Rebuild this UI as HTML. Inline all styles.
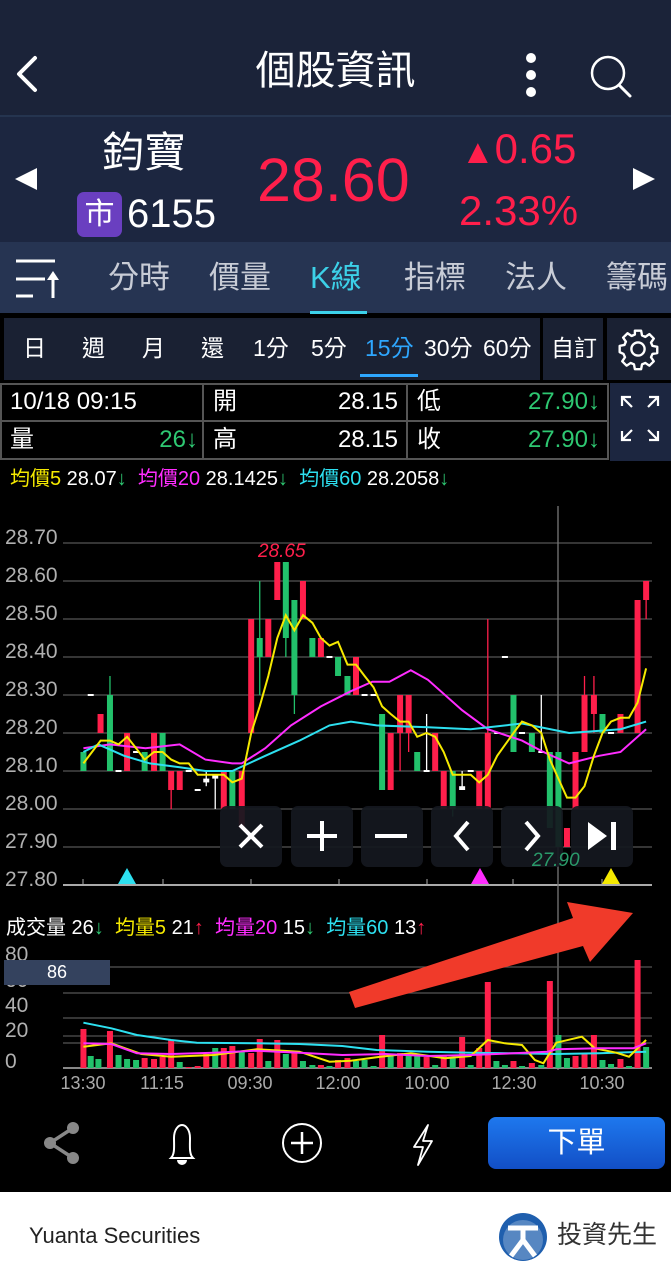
<!DOCTYPE html>
<html><head><meta charset="utf-8">
<style>
*{margin:0;padding:0;box-sizing:border-box}
body{width:671px;height:1280px;background:#000;font-family:"Liberation Sans","Noto Sans CJK TC",sans-serif;position:relative;overflow:hidden;color:#fff}
.a{position:absolute;white-space:nowrap}
</style></head><body>
<!-- header -->
<div class="a" style="left:0;top:0;width:671px;height:115px;background:#1b2339"></div>
<svg class="a" style="left:0;top:0" width="671" height="115">
<polyline points="35,58 19,74 35,90" fill="none" stroke="#fff" stroke-width="4" stroke-linecap="round" stroke-linejoin="round"/>
<circle cx="531" cy="58" r="5" fill="#fff"/><circle cx="531" cy="75" r="5" fill="#fff"/><circle cx="531" cy="92" r="5" fill="#fff"/>
<circle cx="608" cy="73" r="16" fill="none" stroke="#fff" stroke-width="2.5"/><line x1="619" y1="85" x2="630" y2="96" stroke="#fff" stroke-width="3" stroke-linecap="round"/>
</svg>
<div class="a" style="left:0;top:46px;width:671px;text-align:center;font-size:40px;line-height:50px">個股資訊</div>
<!-- stock -->
<div class="a" style="left:0;top:115px;width:671px;height:127px;background:#1c2640;border-top:2px solid #25344f"></div>
<svg class="a" style="left:0;top:115px" width="671" height="127">
<polygon points="37,53 37,75 15,64" fill="#fff"/><polygon points="633,53 633,75 655,64" fill="#fff"/>
</svg>
<div class="a" style="left:102px;top:127px;font-size:42px;line-height:52px">鈞寶</div>
<div class="a" style="left:77px;top:192px;width:45px;height:45px;background:#6a3fc0;border-radius:7px;font-size:30px;line-height:45px;text-align:center">市</div>
<div class="a" style="left:127px;top:192px;font-size:40px;line-height:44px">6155</div>
<div class="a" style="left:257px;top:146px;font-size:61px;line-height:68px;color:#ff1f4b">28.60</div>
<div class="a" style="left:461px;top:127px;font-size:42px;line-height:44px;color:#ff1f4b"><span style="font-size:34px">▲</span>0.65</div>
<div class="a" style="left:459px;top:189px;font-size:42px;line-height:44px;color:#ff1f4b">2.33%</div>
<!-- tabs -->
<div class="a" style="left:0;top:242px;width:671px;height:71px;background:#263452"></div>
<svg class="a" style="left:0;top:242px" width="671" height="75">
<line x1="16" y1="19" x2="55" y2="19" stroke="#fff" stroke-width="3"/>
<line x1="16" y1="37" x2="45" y2="37" stroke="#fff" stroke-width="3"/>
<line x1="16" y1="54" x2="33" y2="54" stroke="#fff" stroke-width="3"/>
<line x1="53" y1="56" x2="53" y2="34" stroke="#fff" stroke-width="3"/><polygon points="47,38 53,29 59,38" fill="#fff"/>
<rect x="310" y="69" width="57" height="3" fill="#3cd0e8"/>
</svg>
<div class="a" style="top:257px;font-size:31px;line-height:42px;color:#c8ccd6;left:0;width:671px">
<span class="a" style="left:108px">分時</span><span class="a" style="left:209px">價量</span><span class="a" style="left:310px;color:#3cd0e8">K線</span><span class="a" style="left:404px">指標</span><span class="a" style="left:505px">法人</span><span class="a" style="left:606px">籌碼</span></div>
<!-- period bar -->
<div class="a" style="left:4px;top:318px;width:536px;height:62px;background:#1a2133"></div>
<div class="a" style="left:543px;top:318px;width:60px;height:62px;background:#1a2133"></div>
<div class="a" style="left:607px;top:318px;width:64px;height:62px;background:#1a2133"></div>
<div class="a" style="top:332px;font-size:23px;line-height:32px;left:0;width:671px">
<span class="a" style="left:23px">日</span><span class="a" style="left:82px">週</span><span class="a" style="left:142px">月</span><span class="a" style="left:201px">還</span><span class="a" style="left:253px">1分</span><span class="a" style="left:311px">5分</span><span class="a" style="left:365px;color:#2ea7ff">15分</span><span class="a" style="left:424px">30分</span><span class="a" style="left:483px">60分</span><span class="a" style="left:551px">自訂</span></div>
<div class="a" style="left:360px;top:374px;width:58px;height:3px;background:#2ea7ff"></div>
<svg class="a" style="left:616px;top:327px" width="44" height="44" viewBox="0 0 24 24"><path d="M10.3 2h3.4l.5 2.6 1.8.8 2.2-1.5 2.4 2.4-1.5 2.2.8 1.8 2.6.5v3.4l-2.6.5-.8 1.8 1.5 2.2-2.4 2.4-2.2-1.5-1.8.8-.5 2.6h-3.4l-.5-2.6-1.8-.8-2.2 1.5-2.4-2.4 1.5-2.2-.8-1.8L2 13.7v-3.4l2.6-.5.8-1.8-1.5-2.2 2.4-2.4 2.2 1.5 1.8-.8z" fill="none" stroke="#fff" stroke-width="1.3" stroke-linejoin="round"/><circle cx="12" cy="12" r="3.6" fill="none" stroke="#fff" stroke-width="1.3"/></svg>
<!-- info table -->
<svg class="a" style="left:0;top:383px" width="671" height="78">
<rect x="610" y="0" width="61" height="78" fill="#1c2640"/>
<g fill="none" stroke="#555" stroke-width="2"><rect x="1" y="1" width="607" height="75"/><line x1="1" y1="38" x2="608" y2="38"/><line x1="203" y1="0" x2="203" y2="77"/><line x1="407" y1="0" x2="407" y2="77"/></g>
<g stroke="#fff" stroke-width="2.2" fill="none"><path d="M622 23v-9h9M622 14l10 10M658 23v-9h-9M658 14l-10 10M622 48v9h9M622 57l10-10M658 48v9h-9M658 57l-10-10"/></g>
</svg>
<div class="a" style="top:386px;font-size:24px;line-height:32px;left:0;width:671px">
<span class="a" style="left:10px">10/18 09:15</span><span class="a" style="left:213px">開</span><span class="a" style="right:273px">28.15</span><span class="a" style="left:417px">低</span><span class="a" style="right:71px;color:#2ec872">27.90↓</span></div>
<div class="a" style="top:424px;font-size:24px;line-height:32px;left:0;width:671px">
<span class="a" style="left:10px">量</span><span class="a" style="right:473px;color:#2ec872">26↓</span><span class="a" style="left:213px">高</span><span class="a" style="right:273px">28.15</span><span class="a" style="left:417px">收</span><span class="a" style="right:71px;color:#2ec872">27.90↓</span></div>
<div class="a" style="left:10px;top:466px;font-size:20px;line-height:26px"><span style="color:#f5e900">均價5</span> 28.07<span style="color:#2ec872">↓</span>&nbsp; <span style="color:#ff2cff">均價20</span> 28.1425<span style="color:#2ec872">↓</span>&nbsp; <span style="color:#2de0f0">均價60</span> 28.2058<span style="color:#2ec872">↓</span></div>
<!-- charts -->
<svg id="ch" class="a" style="left:0;top:0" width="671" height="1110"></svg>
<div class="a" style="left:4px;top:960px;width:106px;height:25px;background:#34425e;font-size:18px;line-height:25px;text-align:center">86</div>
<!-- toolbar -->
<svg class="a" style="left:0;top:1110px" width="671" height="82">
<g fill="#888"><circle cx="73" cy="18" r="6"/><circle cx="50" cy="33" r="6"/><circle cx="73" cy="48" r="6"/></g>
<path d="M73 18L50 33L73 48" stroke="#888" stroke-width="3.5" fill="none"/>
<path d="M171 48c4-4 3-12 3-20 0-8 4-13 8-13s8 5 8 13c0 8-1 16 3 20z" fill="none" stroke="#fff" stroke-width="2"/><path d="M177 50a5 5 0 0 0 10 0z" fill="#fff"/>
<circle cx="302" cy="33" r="19" fill="none" stroke="#fff" stroke-width="2"/><path d="M302 22v22M291 33h22" stroke="#fff" stroke-width="2.5"/>
<path d="M428 15l-14 22h9l-5 18 14-24h-9z" fill="none" stroke="#fff" stroke-width="1.8" stroke-linejoin="round"/>
<defs><linearGradient id="bg" x1="0" y1="0" x2="0" y2="1"><stop offset="0" stop-color="#1e78ee"/><stop offset="1" stop-color="#124fc6"/></linearGradient></defs>
<rect x="488" y="7" width="177" height="52" rx="8" fill="url(#bg)"/>
</svg>
<div class="a" style="left:488px;top:1117px;width:177px;text-align:center;font-size:29px;line-height:52px">下單</div>
<!-- footer -->
<div class="a" style="left:0;top:1192px;width:671px;height:88px;background:#fff"></div>
<div class="a" style="left:29px;top:1222px;font-size:22px;line-height:28px;color:#222">Yuanta Securities</div>
<svg class="a" style="left:496px;top:1210px" width="54" height="54"><circle cx="27" cy="27" r="24" fill="#1f5fae"/><circle cx="27" cy="30" r="20" fill="#fff" opacity=".25"/><path d="M12 18h30M27 18v12M27 30l-12 16M27 30l12 16" stroke="#fff" stroke-width="5"/></svg>
<div class="a" style="left:557px;top:1220px;font-size:25px;line-height:30px;color:#333">投資先生</div>
<script>
var s='';
function Y(p){return 543+(28.70-p)*380;}
function X(z){return z/2.337;}
var lab=['28.70','28.60','28.50','28.40','28.30','28.20','28.10','28.00','27.90','27.80'];
for(var i=0;i<10;i++){var y=543+i*38;s+='<line x1="63" y1="'+y+'" x2="652" y2="'+y+'" stroke="#555" stroke-width="1.3"/>';s+='<text x="5" y="'+(y+1)+'" fill="#b0b0b0" font-size="21">'+lab[i]+'</text>';}
s+='<line x1="63" y1="885" x2="652" y2="885" stroke="#aaa" stroke-width="2"/>';
[83,163,251,339,427,513,602].forEach(function(x){s+='<line x1="'+x+'" y1="879" x2="'+x+'" y2="885" stroke="#aaa"/>';});
s+='<line x1="558" y1="506" x2="558" y2="1070" stroke="#777" stroke-width="1.3"/>';
var C=[[195,'g',28.15,28.10],[212,'w',28.30,28.30],[235,'r',28.25,28.20],[257,'g',28.30,28.10,28.35,28.10],[277,'w',28.10,28.10],[297,'r',28.20,28.10],[318,'w',28.15,28.15],[338,'g',28.15,28.10],[360,'r',28.20,28.10],[380,'g',28.20,28.10],[400,'r',28.10,28.05,28.10,28.00],[420,'r',28.10,28.05],[441,'w',28.10,28.10],[462,'w',28.05,28.05],[482,'w',28.08,28.07,28.10,28.06],[503,'w',28.09,28.08,28.09,28.00],[523,'r',28.10,28.00],[543,'g',28.10,28.00],[565,'r',28.10,27.95],[587,'r',28.50,28.20],[607,'g',28.45,28.40,28.60,28.30],[627,'r',28.50,28.40],[648,'r',28.65,28.55],[668,'g',28.65,28.45,28.65,28.40],[688,'g',28.55,28.30,28.55,28.25],[708,'r',28.60,28.50],[730,'g',28.45,28.40],[750,'r',28.45,28.40],[770,'w',28.40,28.40],[790,'g',28.40,28.35],[812,'g',28.35,28.30],[832,'r',28.40,28.30],[852,'w',28.30,28.30],[873,'w',28.30,28.30],[893,'g',28.25,28.05],[913,'r',28.20,28.05],[935,'r',28.30,28.20,28.30,28.10],[955,'r',28.30,28.20,28.30,28.15],[975,'g',28.15,28.10],[997,'w',28.10,28.10,28.25,28.10],[1017,'r',28.20,28.10],[1037,'r',28.10,28.00],[1058,'g',28.10,28.00,28.10,27.98],[1080,'w',28.06,28.05,28.10,28.05],[1100,'w',28.10,28.10],[1120,'r',28.10,28.00],[1140,'r',28.20,28.00,28.50,28.00],[1162,'w',28.20,28.20],[1180,'w',28.40,28.40],[1200,'g',28.30,28.15],[1220,'w',28.20,28.20],[1243,'g',28.20,28.15],[1265,'w',28.15,28.15,28.30,28.15],[1285,'g',28.15,27.95],[1305,'g',28.15,27.90],[1325,'r',27.95,27.90],[1345,'r',28.15,28.00],[1366,'r',28.30,28.15,28.35,28.15],[1388,'r',28.30,28.25,28.35,28.20],[1408,'g',28.25,28.20],[1428,'w',28.20,28.20],[1450,'r',28.25,28.20],[1490,'r',28.55,28.20],[1510,'r',28.60,28.55,28.60,28.50]];
var col={r:'#ff1f4b',g:'#22c16b',w:'#ffffff'};
C.forEach(function(c){var x=X(c[0]),f=col[c[1]];
 if(c[4]!==undefined){var wb=(c[5]!==undefined)?c[5]:c[3];s+='<line x1="'+x+'" y1="'+Y(c[4])+'" x2="'+x+'" y2="'+Y(wb)+'" stroke="'+f+'" stroke-width="1.3"/>';}
 var t=Y(c[2]),b=Y(c[3]);if(b-t<2){t-=1;b=t+2;}
 s+='<rect x="'+(x-3)+'" y="'+t+'" width="6" height="'+(b-t)+'" fill="'+f+'"/>';});
function line(pts,c){var p=pts.map(function(q){return X(q[0]).toFixed(1)+','+Y(q[1]).toFixed(1)}).join(' ');return '<polyline points="'+p+'" fill="none" stroke="'+c+'" stroke-width="2"/>';}
s+=line([[195,28.16],[257,28.17],[340,28.16],[420,28.17],[480,28.13],[543,28.12],[565,28.12],[620,28.16],[680,28.22],[750,28.27],[820,28.31],[870,28.335],[910,28.335],[960,28.365],[1000,28.34],[1080,28.26],[1140,28.21],[1220,28.18],[1270,28.15],[1330,28.12],[1400,28.14],[1450,28.15],[1510,28.21]],'#ff2cff');
s+=line([[195,28.15],[230,28.17],[290,28.14],[350,28.12],[420,28.11],[480,28.10],[543,28.10],[620,28.14],[700,28.18],[770,28.22],[820,28.23],[880,28.22],[1000,28.215],[1100,28.21],[1220,28.225],[1330,28.20],[1450,28.21],[1510,28.23]],'#2de0f0');
s+=line([[195,28.12],[235,28.18],[257,28.18],[277,28.17],[297,28.19],[318,28.16],[338,28.13],[360,28.15],[380,28.15],[400,28.13],[420,28.12],[441,28.12],[462,28.09],[503,28.09],[523,28.09],[543,28.07],[565,28.08],[587,28.20],[607,28.27],[627,28.35],[648,28.45],[668,28.51],[688,28.47],[708,28.51],[730,28.49],[750,28.45],[770,28.43],[790,28.44],[812,28.38],[832,28.38],[852,28.35],[873,28.32],[893,28.27],[913,28.25],[935,28.23],[955,28.23],[975,28.19],[997,28.20],[1017,28.19],[1037,28.15],[1058,28.09],[1080,28.09],[1100,28.09],[1120,28.07],[1140,28.09],[1162,28.14],[1200,28.20],[1220,28.23],[1243,28.22],[1265,28.20],[1285,28.13],[1305,28.08],[1325,28.03],[1345,28.03],[1366,28.06],[1388,28.14],[1408,28.20],[1428,28.23],[1450,28.24],[1470,28.24],[1490,28.28],[1510,28.37]],'#f5e900');
s+='<text x="258" y="557" fill="#ff1f4b" font-size="19" font-style="italic">28.65</text>';
s+='<polygon points="118,884 136,884 127,868" fill="#2de0f0"/><polygon points="471,884 489,884 480,868" fill="#ff2cff"/><polygon points="602,884 620,884 611,868" fill="#f5e900"/>';
var bx=[220,291,361,431,501,571];
bx.forEach(function(x){s+='<rect x="'+x+'" y="806" width="62" height="61" rx="7" fill="#14181f" fill-opacity="0.93"/>';});
s+='<text x="532" y="866" fill="#2a9a6a" font-size="19" font-style="italic">27.90</text>';
s+='<g stroke="#fff" stroke-width="4" fill="none"><path d="M240 825l22 22M262 825l-22 22M307 836h30M322 821v30M375 836h32M468 822l-12 14 12 14M526 822l12 14-12 14"/></g>';
s+='<polygon points="588,822 588,850 607,836" fill="#fff"/><rect x="611" y="822" width="5" height="28" fill="#fff"/>';
var vl=[[80,967],[60,993],[40,1018],[20,1043]];
vl.forEach(function(v){s+='<line x1="63" y1="'+v[1]+'" x2="652" y2="'+v[1]+'" stroke="#555" stroke-width="1.3"/><text x="5" y="'+(v[1]-6)+'" fill="#b0b0b0" font-size="21">'+v[0]+'</text>';});
s+='<line x1="63" y1="1036" x2="652" y2="1036" stroke="#666"/>';
s+='<text x="5" y="1068" fill="#b0b0b0" font-size="21">0</text><line x1="63" y1="1068" x2="652" y2="1068" stroke="#888" stroke-width="2"/>';
var V=[[195,'r',39],[212,'g',12],[230,'g',9],[257,'r',37],[277,'g',13],[297,'g',9],[318,'g',8],[338,'r',10],[360,'r',9],[380,'r',11],[400,'r',28],[420,'g',6],[441,'r',1],[462,'r',2],[482,'r',14],[503,'g',20],[523,'r',20],[543,'r',22],[565,'g',17],[587,'r',15],[607,'r',29],[627,'g',7],[648,'r',28],[668,'g',14],[688,'r',16],[708,'g',7],[730,'g',3],[750,'r',3],[770,'g',2],[790,'r',8],[812,'r',10],[832,'g',7],[852,'g',8],[873,'g',2],[893,'r',33],[913,'g',12],[935,'r',15],[955,'g',13],[975,'g',12],[997,'r',11],[1017,'g',3],[1037,'r',13],[1058,'g',10],[1080,'r',31],[1100,'g',3],[1120,'r',20],[1140,'r',86],[1160,'g',7],[1180,'g',3],[1200,'r',7],[1220,'g',2],[1243,'r',5],[1265,'g',3],[1285,'r',87],[1305,'g',33],[1325,'g',10],[1345,'r',12],[1366,'r',14],[1388,'r',33],[1408,'g',8],[1428,'g',4],[1450,'r',9],[1470,'g',2],[1490,'r',108],[1510,'g',21]];
V.forEach(function(v){var x=X(v[0]);s+='<rect x="'+(x-3)+'" y="'+(1068-v[2])+'" width="6" height="'+v[2]+'" fill="'+col[v[1]]+'"/>';});
function vline(pts,c){var p=pts.map(function(q){return X(q[0]).toFixed(1)+','+(900+q[1]/3).toFixed(1)}).join(' ');return '<polyline points="'+p+'" fill="none" stroke="'+c+'" stroke-width="2"/>';}
s+=vline([[195,368],[260,385],[320,405],[400,420],[460,428],[600,430],[700,432],[800,438],[880,450],[1000,455],[1100,458],[1200,460],[1300,462],[1400,460],[1510,455]],'#2de0f0');
s+=vline([[195,440],[260,430],[330,462],[400,470],[500,465],[600,448],[700,455],[770,485],[820,482],[880,472],[960,460],[1040,475],[1100,468],[1140,420],[1180,430],[1220,435],[1250,480],[1270,490],[1300,428],[1360,410],[1390,445],[1440,458],[1470,470],[1510,420]],'#f5e900');
s+=vline([[195,430],[260,432],[320,460],[400,462],[500,458],[600,452],[700,458],[800,465],[900,462],[1000,468],[1100,465],[1200,460],[1280,455],[1300,448],[1400,445],[1480,445],[1510,430]],'#ff2cff');
s+='<polygon points="349,992 573,918 567,902 633,913 590,962 583,946 355,1008" fill="#f03a2a"/>';
[['13:30',83],['11:15',162],['09:30',250],['12:00',338],['10:00',427],['12:30',514],['10:30',602]].forEach(function(t){s+='<text x="'+t[1]+'" y="1089" fill="#aaa" font-size="18" text-anchor="middle">'+t[0]+'</text>';});
document.getElementById('ch').innerHTML=s;
</script>
<div class="a" style="left:6px;top:915px;font-size:20px;line-height:26px">成交量 26<span style="color:#2ec872">↓</span>&nbsp; <span style="color:#f5e900">均量5</span> 21<span style="color:#ff1f4b">↑</span>&nbsp; <span style="color:#ff2cff">均量20</span> 15<span style="color:#2ec872">↓</span>&nbsp; <span style="color:#2de0f0">均量60</span> 13<span style="color:#ff1f4b">↑</span></div>
</body></html>
